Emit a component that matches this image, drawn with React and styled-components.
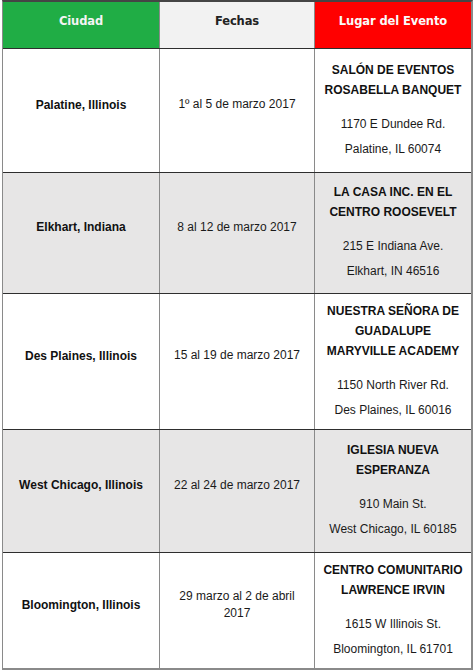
import React from 'react';
import styled, { createGlobalStyle } from 'styled-components';

const GlobalStyle = createGlobalStyle`
  html, body {
    margin: 0;
    padding: 0;
    background: #fff;
  }
  body {
    font-family: "Liberation Sans", Arial, sans-serif;
    color: #1a1a1a;
  }
`;

const events = [
  {
    city: 'Palatine, Illinois',
    dates: ['1º al 5 de marzo 2017'],
    place: ['SALÓN DE EVENTOS', 'ROSABELLA BANQUET'],
    address: ['1170 E Dundee Rd.', 'Palatine, IL 60074'],
    height: 124,
  },
  {
    city: 'Elkhart, Indiana',
    dates: ['8 al 12 de marzo 2017'],
    place: ['LA CASA INC. EN EL', 'CENTRO ROOSEVELT'],
    address: ['215 E Indiana Ave.', 'Elkhart, IN 46516'],
    height: 121,
    shaded: true,
  },
  {
    city: 'Des Plaines, Illinois',
    dates: ['15 al 19 de marzo 2017'],
    place: ['NUESTRA SEÑORA DE', 'GUADALUPE', 'MARYVILLE ACADEMY'],
    address: ['1150 North River Rd.', 'Des Plaines, IL 60016'],
    height: 136,
  },
  {
    city: 'West Chicago, Illinois',
    dates: ['22 al 24 de marzo 2017'],
    place: ['IGLESIA NUEVA', 'ESPERANZA'],
    address: ['910 Main St.', 'West Chicago, IL 60185'],
    height: 123,
    shaded: true,
  },
  {
    city: 'Bloomington, Illinois',
    dates: ['29 marzo al 2 de abril', '2017'],
    place: ['CENTRO COMUNITARIO', 'LAWRENCE IRVIN'],
    address: ['1615 W Illinois St.', 'Bloomington, IL 61701'],
    height: 115,
    last: true,
  },
];

const headers = [
  { label: 'Ciudad', bg: '#20ad45', color: '#f4f4f4' },
  { label: 'Fechas', bg: '#f2f2f2', color: '#222' },
  { label: 'Lugar del Evento', bg: '#ff0000', color: '#fafafa' },
];

export default function App() {
  return (
    <>
      <GlobalStyle />
      <Table>
        <HeadRow>
          {headers.map(h => (
            <HeadCell key={h.label} bg={h.bg} color={h.color}>{h.label}</HeadCell>
          ))}
        </HeadRow>
        {events.map(ev => (
          <Row key={ev.city} height={ev.height} shaded={ev.shaded} last={ev.last}>
            <Cell>
              <City>{ev.city}</City>
            </Cell>
            <Cell>
              {ev.dates.map(d => <DateLine key={d}>{d}</DateLine>)}
            </Cell>
            <PlaceCell>
              <PlaceName>
                {ev.place.map(p => <div key={p}>{p}</div>)}
              </PlaceName>
              <Address>
                {ev.address.map(a => <div key={a}>{a}</div>)}
              </Address>
            </PlaceCell>
          </Row>
        ))}
      </Table>
    </>
  );
}

const Table = styled.div`
  margin-left: 2px;
  width: 471px;
  box-sizing: border-box;
  border-top: 2px solid #454545;
  border-left: 1px solid #8a8a8a;
  border-right: 2px solid #8a8a8a;
  border-bottom: 2px solid #8a8a8a;
`;

const HeadRow = styled.div`
  display: grid;
  grid-template-columns: 157px 155px 156px;
  height: 47px;
  box-sizing: border-box;
  border-bottom: 1px solid #2e2e2e;
`;

const HeadCell = styled.div`
  display: flex;
  align-items: center;
  justify-content: center;
  padding-bottom: 9px;
  box-sizing: border-box;
  background: ${p => p.bg};
  color: ${p => p.color};
  font-family: "DejaVu Sans", Verdana, sans-serif;
  font-weight: bold;
  font-size: 11.5px;
  letter-spacing: -0.1px;
  border-right: 1px solid #8a8a8a;
  &:last-child {
    border-right: none;
  }
`;

const Row = styled.div`
  display: grid;
  grid-template-columns: 157px 155px 156px;
  height: ${p => p.height}px;
  box-sizing: border-box;
  background: ${p => (p.shaded ? '#e7e6e6' : '#fff')};
  border-bottom: ${p => (p.last ? 'none' : '1px solid #2e2e2e')};
`;

const Cell = styled.div`
  display: flex;
  flex-direction: column;
  align-items: center;
  justify-content: center;
  text-align: center;
  padding-bottom: 12px;
  box-sizing: border-box;
  font-size: 12px;
  border-right: 1px solid #8a8a8a;
`;

const PlaceCell = styled(Cell)`
  padding-bottom: 0;
  border-right: none;
`;

const City = styled.div`
  font-weight: bold;
  color: #111;
`;

const DateLine = styled.div`
  line-height: 17px;
  color: #1a1a1a;
`;

const PlaceName = styled.div`
  font-weight: bold;
  line-height: 20px;
  color: #111;
`;

const Address = styled.div`
  margin-top: 12px;
  line-height: 25px;
  color: #1a1a1a;
`;
